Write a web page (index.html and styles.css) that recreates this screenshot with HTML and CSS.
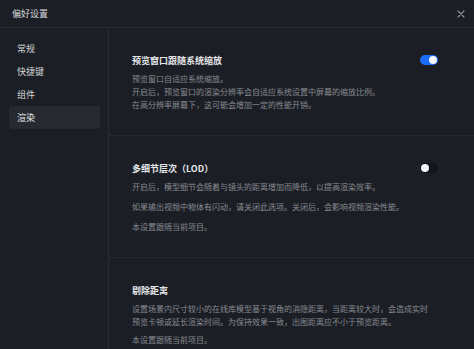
FILE: index.html
```html
<!DOCTYPE html>
<html lang="zh-CN">
<head>
<meta charset="utf-8">
<link rel="stylesheet" href="styles.css">
</head>
<body>
<div class="dialog">
  <header class="header">
    <span class="header-title">偏好设置</span>
    <svg class="close" width="8" height="8" viewBox="0 0 8 8"><path d="M1 1L7 7M7 1L1 7" stroke="#8a8d94" stroke-width="1.2" stroke-linecap="round"/></svg>
  </header>
  <div class="body">
    <nav class="sidebar">
      <div class="nav-item">常规</div>
      <div class="nav-item">快捷键</div>
      <div class="nav-item">组件</div>
      <div class="nav-item active">渲染</div>
    </nav>
    <main class="content">
      <section class="section">
        <div class="row">
          <div class="texts">
            <div class="title">预览窗口跟随系统缩放</div>
            <div class="desc">
              <p>预览窗口自适应系统缩放。<br>开启后，预览窗口的渲染分辨率会自适应系统设置中屏幕的缩放比例。<br>在高分辨率屏幕下，这可能会增加一定的性能开销。</p>
            </div>
          </div>
          <div class="toggle on"><span class="knob"></span></div>
        </div>
      </section>
      <section class="section">
        <div class="row">
          <div class="texts">
            <div class="title">多细节层次（LOD）</div>
            <div class="desc">
              <p>开启后，模型细节会随着与镜头的距离增加而降低，以提高渲染效率。</p>
              <p>如果输出视频中物体有闪动，请关闭此选项。关闭后，会影响视频渲染性能。</p>
              <p>本设置跟随当前项目。</p>
            </div>
          </div>
          <div class="toggle off"><span class="knob"></span></div>
        </div>
      </section>
      <section class="section last">
        <div class="texts">
          <div class="title">剔除距离</div>
          <div class="desc">
            <p>设置场景内尺寸较小的在线库模型基于视角的消隐距离，当距离较大时，会造成实时<br>预览卡顿或延长渲染时间。为保持效果一致，出图距离应不小于预览距离。</p>
            <p class="tight">本设置跟随当前项目。</p>
          </div>
        </div>
      </section>
    </main>
  </div>
</div>
</body>
</html>
```

FILE: styles.css
```css
* { box-sizing: border-box; }
html, body {
  margin: 0;
  padding: 0;
  background: #1b1e24;
  height: 100%;
  overflow: hidden;
}
body {
  font-family: "Noto Sans CJK SC", "Noto Sans", sans-serif;
  color: #d4d6da;
}
.dialog {
  width: 474px;
  height: 349px;
  display: flex;
  flex-direction: column;
  overflow: hidden;
}
.header {
  height: 28px;
  flex: none;
  border-bottom: 1px solid #262a31;
  display: flex;
  align-items: center;
  justify-content: space-between;
  padding: 0 9px 0 12px;
}
.header-title {
  font-size: 9px;
  line-height: 12px;
  color: #d8dade;
}
.close { display: block; }
.body {
  flex: 1;
  display: flex;
  min-height: 0;
}
.sidebar {
  width: 109px;
  flex: none;
  border-right: 1px solid #262a31;
  padding: 9px 8px 0 9px;
  display: flex;
  flex-direction: column;
}
.nav-item {
  height: 23px;
  line-height: 23px;
  padding-left: 8px;
  font-size: 9px;
  color: #d2d4d8;
  border-radius: 3px;
}
.nav-item.active {
  background: #262930;
  color: #e8eaed;
}
.content {
  flex: 1;
  min-width: 0;
}
.section {
  padding: 26px 36px 24px 23px;
  border-bottom: 1px solid #252930;
}
.section.last { border-bottom: none; }
.row {
  display: flex;
  justify-content: space-between;
  align-items: flex-start;
}
.title {
  font-size: 9px;
  line-height: 14px;
  font-weight: 700;
  color: #e4e6e9;
  margin-bottom: 4px;
}
.desc p {
  margin: 0 0 7px;
  font-size: 8px;
  line-height: 13px;
  color: #878b92;
  white-space: nowrap;
}
.desc p:last-child { margin-bottom: 0; }
.desc p.tight { margin-top: -2px; }
.toggle {
  width: 18px;
  height: 10px;
  border-radius: 5px;
  flex: none;
  margin-top: 1px;
  display: flex;
  align-items: center;
  padding: 0 1px;
}
.toggle .knob {
  width: 8px;
  height: 8px;
  border-radius: 50%;
  background: #f2f5fa;
}
.toggle.on {
  background: #1c6cf5;
  justify-content: flex-end;
}
.toggle.off {
  background: #121418;
  justify-content: flex-start;
}
```
